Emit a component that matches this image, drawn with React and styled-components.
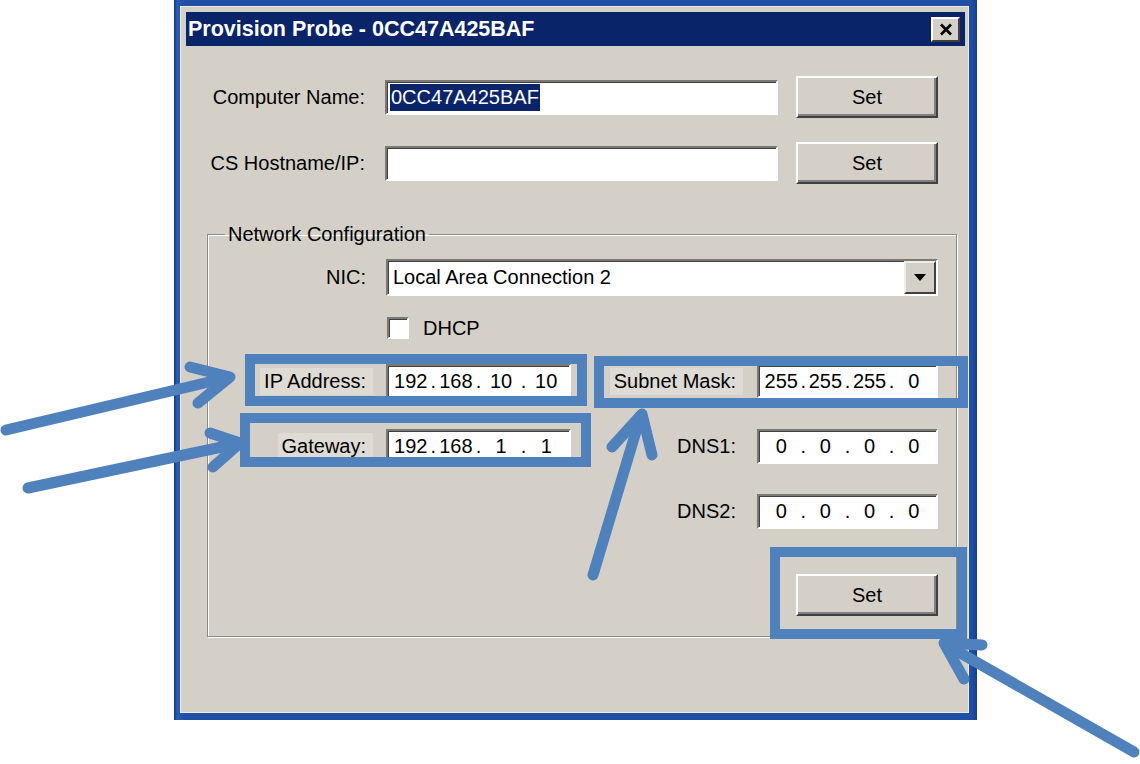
import styled, { createGlobalStyle } from "styled-components";

const GlobalStyle = createGlobalStyle`
  html, body {
    margin: 0;
    padding: 0;
    background: #fff;
  }
  body {
    font-family: "Liberation Sans", Arial, sans-serif;
    color: #000;
  }
`;

const Desktop = styled.div`
  position: relative;
  width: 1140px;
  height: 764px;
  padding-left: 174px;
  box-sizing: border-box;
  background: #fff;
  overflow: hidden;
`;

const Frame = styled.div`
  width: 803px;
  height: 720px;
  box-sizing: border-box;
  padding: 6px 8px 7px 6px;
  background: linear-gradient(90deg, #0b3890 0px, #2a5cb6 3px, #1f50a6 10px, #1f50a6 calc(100% - 6px), #163f94 100%);
`;

const Dialog = styled.div`
  display: flex;
  flex-direction: column;
  height: 100%;
  box-sizing: border-box;
  padding: 5px 3px 0 5px;
  background: #d4d0c8;
  border: 1px solid #eeece6;
`;

const TitleBar = styled.div`
  display: flex;
  align-items: center;
  justify-content: space-between;
  height: 34px;
  padding: 0 5px 0 2px;
  background: #0a246a;
  color: #fff;
  font-weight: bold;
  font-size: 21.5px;
`;

const CloseButton = styled.div`
  display: flex;
  align-items: center;
  justify-content: center;
  width: 29px;
  height: 25px;
  box-sizing: border-box;
  background: #d4d0c8;
  border: 2px solid;
  border-color: #fff #404040 #404040 #fff;
`;

const Body = styled.div`
  display: flex;
  flex-direction: column;
  padding-top: 30px;
`;

const TopRow = styled.div`
  display: flex;
  align-items: center;
  height: 42px;
  margin-bottom: 24px;
`;

const Label = styled.div`
  display: flex;
  align-items: center;
  justify-content: flex-end;
  width: ${(p) => p.$width || 179}px;
  height: ${(p) => p.$height || 34}px;
  font-size: 20px;
  white-space: nowrap;
  box-sizing: border-box;
  padding-right: ${(p) => p.$pad || 0}px;
  grid-column: ${(p) => p.$col || "auto"};
`;

const LitText = styled.span`
  background: #dedbd4;
  padding: 2px 7px 2px 4px;
  margin-right: -7px;
`;

const TextBox = styled.div`
  display: flex;
  align-items: center;
  width: ${(p) => p.$width || 393}px;
  height: ${(p) => p.$height || 35}px;
  margin-left: ${(p) => p.$ml || 0}px;
  box-sizing: border-box;
  padding-left: 3px;
  background: #fff;
  border: 2px solid;
  border-color: #7b7974 #fff #fff #7b7974;
  box-shadow: inset 1px 1px 0 #404040;
  font-size: 20px;
  white-space: nowrap;
  grid-column: ${(p) => p.$col || "auto"};
`;

const Selected = styled.span`
  background: #0a246a;
  color: #fff;
  line-height: 27px;
  padding: 0 1px;
`;

const Button = styled.div`
  display: flex;
  align-items: center;
  justify-content: center;
  width: 142px;
  height: 42px;
  margin-left: ${(p) => p.$ml || 0}px;
  box-sizing: border-box;
  background: #d4d0c8;
  border: 2px solid;
  border-color: #fff #404040 #404040 #fff;
  box-shadow: inset -2px -2px 0 #808080;
  font-size: 20px;
  grid-column: ${(p) => p.$col || "auto"};
  justify-self: end;
`;

const Group = styled.fieldset`
  margin: 14px 0 0 21px;
  width: 750px;
  min-width: 0;
  box-sizing: border-box;
  padding: 13px 0 20px 0;
  border: 1px solid #8c8a85;
  box-shadow: inset 1px 1px 0 #fff, 1px 1px 0 #fff;
`;

const Legend = styled.legend`
  margin-left: 17px;
  padding: 0 3px;
  font-size: 20px;
  line-height: 24px;
`;

const GroupGrid = styled.div`
  display: grid;
  grid-template-columns: 158px 20px 185px 186px 181px;
  grid-template-rows: 58px 47px 65px 65px 80px 42px;
  align-items: start;
`;

const Combo = styled(TextBox)`
  justify-content: space-between;
  padding: 0 0 0 5px;
`;

const DropButton = styled.div`
  display: flex;
  align-items: center;
  justify-content: center;
  width: 32px;
  height: 100%;
  box-sizing: border-box;
  background: #d4d0c8;
  border: 2px solid;
  border-color: #eeece6 #404040 #404040 #eeece6;
`;

const CheckRow = styled.div`
  grid-column: 3 / 6;
  display: flex;
  align-items: center;
  gap: 14px;
  height: 22px;
  padding-left: 1px;
  font-size: 20px;
`;

const CheckBox = styled.div`
  width: 22px;
  height: 22px;
  box-sizing: border-box;
  background: #fff;
  border: 2px solid;
  border-color: #7b7974 #fff #fff #7b7974;
  box-shadow: inset 1px 1px 0 #404040;
`;

const Octets = styled.div`
  display: grid;
  grid-template-columns: 1fr auto 1fr auto 1fr auto 1fr;
  align-items: center;
  width: 100%;
  padding-right: 3px;
`;

const Octet = styled.span`
  text-align: center;
`;

const Overlay = styled.svg`
  position: absolute;
  left: 0;
  top: 0;
  pointer-events: none;
`;

function IpField({ value, col, width, height }) {
  const parts = value.split(".");
  const cells = [];
  parts.forEach((p, i) => {
    cells.push(<Octet key={"o" + i}>{p}</Octet>);
    if (i < 3) cells.push(<span key={"d" + i}>.</span>);
  });
  return (
    <TextBox $col={col} $width={width} $height={height}>
      <Octets>{cells}</Octets>
    </TextBox>
  );
}

const blue = "#4f81bd";

export default function App() {
  return (
    <>
      <GlobalStyle />
      <Desktop>
        <Frame>
          <Dialog>
            <TitleBar>
              <span>Provision Probe - 0CC47A425BAF</span>
              <CloseButton>
                <svg width="14" height="13" viewBox="0 0 14 13">
                  <path d="M2 1.5 L12 11.5 M12 1.5 L2 11.5" stroke="#000" strokeWidth="2.6" />
                </svg>
              </CloseButton>
            </TitleBar>
            <Body>
              <TopRow>
                <Label>Computer Name:</Label>
                <TextBox $ml={20}>
                  <Selected>0CC47A425BAF</Selected>
                </TextBox>
                <Button $ml={18}>Set</Button>
              </TopRow>
              <TopRow>
                <Label>CS Hostname/IP:</Label>
                <TextBox $ml={20} />
                <Button $ml={18}>Set</Button>
              </TopRow>

              <Group>
                <Legend>Network Configuration</Legend>
                <GroupGrid>
                  <Label $col="1" $width={158} $height={37}>NIC:</Label>
                  <Combo $col="3 / 6" $width={552} $height={37}>
                    <span>Local Area Connection 2</span>
                    <DropButton>
                      <svg width="14" height="8" viewBox="0 0 14 8">
                        <path d="M1 0 H13 L7 7 Z" fill="#000" />
                      </svg>
                    </DropButton>
                  </Combo>

                  <CheckRow>
                    <CheckBox />
                    <span>DHCP</span>
                  </CheckRow>

                  <Label $col="1" $width={158}>
                    <LitText>IP Address:</LitText>
                  </Label>
                  <IpField value="192.168.10.10" col="3" width={185} height={34} />
                  <Label $col="4" $width={186} $pad={21}>
                    <LitText>Subnet Mask:</LitText>
                  </Label>
                  <IpField value="255.255.255.0" col="5" width={181} height={34} />

                  <Label $col="1" $width={158}>
                    <LitText>Gateway:</LitText>
                  </Label>
                  <IpField value="192.168.1.1" col="3" width={185} height={34} />
                  <Label $col="4" $width={186} $pad={21}>DNS1:</Label>
                  <IpField value="0.0.0.0" col="5" width={181} height={35} />

                  <Label $col="4" $width={186} $pad={21} $height={35}>DNS2:</Label>
                  <IpField value="0.0.0.0" col="5" width={181} height={35} />

                  <Button $col="5">Set</Button>
                </GroupGrid>
              </Group>
            </Body>
          </Dialog>
        </Frame>

        <Overlay width="1140" height="764" viewBox="0 0 1140 764">
          <g fill="none" stroke={blue} strokeWidth="10">
            <rect x="250" y="359" width="332" height="42" />
            <rect x="245" y="418" width="341" height="44" />
            <rect x="599" y="361" width="364" height="42" />
            <rect x="775" y="552" width="187" height="82" />
          </g>
          <g fill="none" stroke={blue} strokeWidth="11" strokeLinecap="round" strokeLinejoin="round">
            <path d="M6 430 L226 378" />
            <path d="M190 367 L230 377 L198 403" />
            <path d="M28 488 L236 444" />
            <path d="M210 433 L240 443 L213 467" />
            <path d="M593 575 L640 418" />
            <path d="M612 447 L642 414 L652 455" />
            <path d="M1134 752 L948 646" />
            <path d="M982 645 L944 643 L964 679" />
          </g>
        </Overlay>
      </Desktop>
    </>
  );
}
